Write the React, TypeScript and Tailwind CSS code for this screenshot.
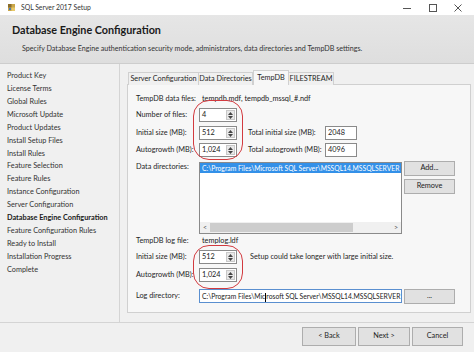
import React from "react";

const navItems = [
  "Product Key",
  "License Terms",
  "Global Rules",
  "Microsoft Update",
  "Product Updates",
  "Install Setup Files",
  "Install Rules",
  "Feature Selection",
  "Feature Rules",
  "Instance Configuration",
  "Server Configuration",
  "Database Engine Configuration",
  "Feature Configuration Rules",
  "Ready to Install",
  "Installation Progress",
  "Complete",
];

const path = "C:\\Program Files\\Microsoft SQL Server\\MSSQL14.MSSQLSERVER";

function Spin({ value }: { value: string }) {
  return (
    <div className="w-[38px] h-[14px] border border-[#8a8a8a] bg-white flex">
      <span className="flex-1 pl-[2px] leading-[12px] text-[#1a1a1a]">{value}</span>
      <div className="w-[9px] my-[1px] mr-[1px] bg-[#e8e8e8] border border-[#c8c8c8] flex flex-col items-center justify-center gap-[1px]">
        <svg width="5" height="3" viewBox="0 0 5 3">
          <path d="M0 3 L2.5 0 L5 3 Z" fill="#444" />
        </svg>
        <svg width="5" height="3" viewBox="0 0 5 3">
          <path d="M0 0 L2.5 3 L5 0 Z" fill="#444" />
        </svg>
      </div>
    </div>
  );
}

function Btn({ children }: { children: React.ReactNode }) {
  return (
    <div className="w-[51px] h-[15px] bg-[#e1e1e1] border border-[#adadad] flex items-center justify-center text-[#222]">
      {children}
    </div>
  );
}

export default function App() {
  return (
    <div
      className="w-[474px] h-[352px] bg-[#f0f0f0] flex flex-col overflow-hidden text-[#262626] text-[7.3px] whitespace-nowrap"
      style={{ fontFamily: 'Lato, "Open Sans", sans-serif' }}
    >
      {/* Title bar */}
      <div className="h-[15px] bg-white flex items-center pl-[7px] shrink-0">
        <svg width="9" height="9" viewBox="0 0 9 9">
          <rect x="1" y="1" width="7" height="7" fill="#c9a64a" />
          <rect x="1" y="1" width="3.5" height="3.5" fill="#8a6d2b" />
          <rect x="4.5" y="4.5" width="3.5" height="3.5" fill="#e6c86a" />
          <rect x="2" y="5" width="2" height="2" fill="#4a7ab8" />
        </svg>
        <span className="ml-[5px] text-[6.8px] text-[#333]">SQL Server 2017 Setup</span>
        <div className="ml-auto flex items-center mr-[12px]">
          <svg width="8" height="8" viewBox="0 0 8 8" className="mr-[18px]">
            <path d="M0 4.5 H8" stroke="#555" strokeWidth="1" />
          </svg>
          <svg width="8" height="8" viewBox="0 0 8 8" className="mr-[17px]">
            <rect x="0.5" y="0.5" width="7" height="7" fill="none" stroke="#555" strokeWidth="1" />
          </svg>
          <svg width="8" height="8" viewBox="0 0 8 8">
            <path d="M0.5 0.5 L7.5 7.5 M7.5 0.5 L0.5 7.5" stroke="#555" strokeWidth="1" />
          </svg>
        </div>
      </div>

      {/* Header */}
      <div className="h-[49px] shrink-0 bg-gradient-to-b from-[#e6e6e6] to-[#dedede] border-b border-[#cdcdcd] pl-[12px] pt-[7px]">
        <div className="text-[10.8px] font-bold text-[#1a1a1a] leading-[16px]">Database Engine Configuration</div>
        <div className="pl-[10px] mt-[6px] text-[7.15px] text-[#333]">
          Specify Database Engine authentication security mode, administrators, data directories and TempDB settings.
        </div>
      </div>

      {/* Body */}
      <div className="h-[259px] shrink-0 flex border-b border-[#d4d4d4]">
        <nav className="w-[120px] shrink-0 border-r border-[#d4d4d4] pt-[6px] pl-[7px]">
          {navItems.map((n) => (
            <div
              key={n}
              className={`h-[12.93px] leading-[12.93px] ${
                n === "Database Engine Configuration" ? "font-bold text-[#1a1a1a]" : "text-[#333]"
              }`}
            >
              {n}
            </div>
          ))}
        </nav>

        <div className="flex-1 pl-[7px] pt-[8px] pr-[3px] pb-[9px] flex flex-col">
          {/* Tabs */}
          <div className="flex h-[13px] relative z-10 pl-[1px]">
            <div className="w-[71px] h-[13px] border border-[#d0d0d0] border-b-0 bg-[#f0f0f0] flex items-center justify-center">
              Server Configuration
            </div>
            <div className="w-[54px] h-[13px] border-t border-r border-[#d0d0d0] bg-[#f0f0f0] flex items-center justify-center">
              Data Directories
            </div>
            <div className="w-[36px] h-[15px] -mt-[2px] border border-[#d0d0d0] border-b-0 bg-[#f7f7f7] flex items-center justify-center">
              TempDB
            </div>
            <div className="w-[45px] h-[13px] border-t border-r border-[#d0d0d0] bg-[#f0f0f0] flex items-center justify-center">
              FILESTREAM
            </div>
          </div>

          {/* Panel */}
          <div className="flex-1 -mt-px border border-[#d0d0d0] bg-[#f7f7f7] pl-[8px] relative flex flex-col">
            <div className="h-[14px] mt-[7px] flex items-center">
              <span className="w-[63px]">TempDB data files:</span>
              <span className="pl-[3px] text-[#1a1a1a]">tempdb.mdf, tempdb_mssql_#.ndf</span>
            </div>

            <div className="h-[14px] mt-[2px] flex items-center">
              <span className="w-[63px]">Number of files:</span>
              <Spin value="4" />
            </div>

            <div className="h-[14px] mt-[4px] flex items-center">
              <span className="w-[63px]">Initial size (MB):</span>
              <Spin value="512" />
              <span className="w-[77px] ml-[11px]">Total initial size (MB):</span>
              <div className="w-[32px] h-[14px] border border-[#8a8a8a] bg-white pl-[2px] leading-[12px]">2048</div>
            </div>

            <div className="h-[14px] mt-[3px] flex items-center">
              <span className="w-[63px]">Autogrowth (MB):</span>
              <Spin value="1,024" />
              <span className="w-[77px] ml-[11px]">Total autogrowth (MB):</span>
              <div className="w-[32px] h-[14px] border border-[#8a8a8a] bg-white pl-[2px] leading-[12px]">4096</div>
            </div>

            <div className="mt-[5px] flex items-start">
              <span className="w-[63px] leading-[10px]">Data directories:</span>
              <div className="w-[203px] h-[72px] border border-[#8a8a8a] bg-white flex flex-col">
                <div className="h-[10px] bg-[#3390e8] text-white text-[6.75px] leading-[10px] pl-[2px] overflow-hidden">{path}</div>
                <div className="flex-1" />
                <div className="h-[11px] bg-[#f0f0f0] flex items-center">
                  <span className="w-[10px] text-center text-[#555] text-[7px]">&lt;</span>
                  <div className="w-[143px] h-[9px] bg-[#cdcdcd]" />
                  <div className="flex-1" />
                  <span className="w-[10px] text-center text-[#555] text-[7px]">&gt;</span>
                </div>
              </div>
              <div className="ml-[2px] -mt-[1px] flex flex-col gap-[3px]">
                <Btn>Add...</Btn>
                <Btn>Remove</Btn>
              </div>
            </div>

            <div className="h-[10px] mt-[2px] flex items-center">
              <span className="w-[63px]">TempDB log file:</span>
              <span className="pl-[3px] text-[#1a1a1a]">templog.ldf</span>
            </div>

            <div className="h-[14px] mt-[4px] flex items-center">
              <span className="w-[63px]">Initial size (MB):</span>
              <Spin value="512" />
              <span className="ml-[13px]">Setup could take longer with large initial size.</span>
            </div>

            <div className="h-[14px] mt-[4px] flex items-center">
              <span className="w-[63px]">Autogrowth (MB):</span>
              <Spin value="1,024" />
            </div>

            <div className="h-[14px] mt-[7px] flex items-center">
              <span className="w-[63px]">Log directory:</span>
              <div className="w-[203px] h-[14px] border border-[#5a8fd0] bg-white pl-[2px] text-[6.75px] leading-[12px] overflow-hidden text-[#1a1a1a]">
                C:\Program Files\Mic<span className="inline-block w-px h-[9px] bg-black align-middle" />rosoft SQL Server\MSSQL14.MSSQLSERVER
              </div>
              <div className="ml-[2px]">
                <Btn>...</Btn>
              </div>
            </div>

            {/* annotation circles */}
            <div className="absolute left-[65px] top-[15px] w-[50px] h-[60px] border-[1.5px] border-[#d23a3f] rounded-[16px]" />
            <div className="absolute left-[65px] top-[160px] w-[50px] h-[44px] border-[1.5px] border-[#d23a3f] rounded-[16px]" />
          </div>
        </div>
      </div>

      {/* Footer */}
      <div className="flex-1 flex justify-end items-start pt-[4px] pr-[11px] gap-[2px]">
        <div className="w-[54px] h-[19px] bg-[#e1e1e1] border border-[#adadad] flex items-center justify-center">&lt; Back</div>
        <div className="w-[52px] h-[19px] bg-[#e1e1e1] border border-[#adadad] flex items-center justify-center">Next &gt;</div>
        <div className="w-[51px] h-[19px] bg-[#e1e1e1] border border-[#adadad] flex items-center justify-center">Cancel</div>
      </div>
    </div>
  );
}
